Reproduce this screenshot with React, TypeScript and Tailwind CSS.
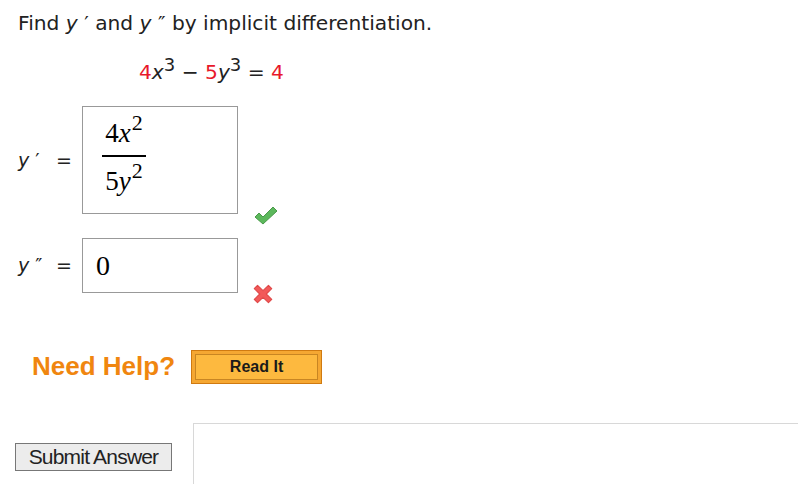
import React from 'react';

const sans = "font-['DejaVu_Sans',Verdana,sans-serif]";
const serif = "font-['Liberation_Serif','Times_New_Roman',serif]";

const Check = () => (
  <svg width="26" height="22" viewBox="0 0 26 22">
    <path d="M2 12 L6 8 L10 12 L20 2 L24 6 L10 19 Z" fill="#5cb85c" stroke="#4a9a4a" strokeWidth="1" strokeLinejoin="round" />
  </svg>
);

const Cross = () => (
  <svg width="24" height="24" viewBox="0 0 22 22">
    <path d="M3 6 L6 3 L11 8 L16 3 L19 6 L14 11 L19 16 L16 19 L11 14 L6 19 L3 16 L8 11 Z" fill="#f25a5a" stroke="#e04848" strokeWidth="1" strokeLinejoin="round" />
  </svg>
);

export default function App() {
  return (
    <div className={`relative w-[798px] h-[484px] bg-white overflow-hidden text-[#222] ${sans}`}>
      <p className="pl-[18px] pt-[9px] text-[20.2px] leading-[28px] whitespace-nowrap">
        Find <i>y</i> ′ and <i>y</i> ″ by implicit differentiation.
      </p>

      <div className="pl-[139px] pt-[22px] text-[20.2px] leading-[26px] text-[#e8182b] whitespace-nowrap">
        4<i className="text-[#222]">x</i><sup className="text-[18px] text-[#222] relative -top-[8px]">3</sup>
        <span className="text-[#222]"> − </span>5<i className="text-[#222]">y</i>
        <sup className="text-[18px] text-[#222] relative -top-[8px]">3</sup>
        <span className="text-[#222]"> = </span>4
      </div>

      <div className="flex items-end mt-[21px] pl-[18px]">
        <div className="flex items-center h-[108px] w-[64px] text-[19px]">
          <span className="w-[38px]"><i>y</i> ′</span>
          <span>=</span>
        </div>
        <div className="w-[156px] h-[108px] border border-[#999] flex flex-col items-start pl-[19px] pt-[13px]">
          <div className={`flex flex-col items-center ${serif} text-[27px] leading-none text-black`}>
            <div className="px-[2px] pb-[8px]">
              4<i>x</i><sup className="text-[22px] relative -top-[12px] ml-[1px]">2</sup>
            </div>
            <div className="w-[44px] h-[1.5px] bg-black" />
            <div className="px-[2px] pt-[11px]">
              5<i>y</i><sup className="text-[22px] relative -top-[12px] ml-[1px]">2</sup>
            </div>
          </div>
        </div>
        <div className="ml-[15px] -mb-[13px]"><Check /></div>
      </div>

      <div className="flex items-end mt-[24px] pl-[18px]">
        <div className="flex items-center h-[55px] w-[64px] text-[19px]">
          <span className="w-[38px]"><i>y</i> ″</span>
          <span>=</span>
        </div>
        <div className={`w-[156px] h-[55px] border border-[#999] flex items-center pl-[13px] ${serif} text-[28px] text-black`}>
          0
        </div>
        <div className="ml-[13px] -mb-[13px]"><Cross /></div>
      </div>

      <div className="flex items-center mt-[54px] pl-[32px] gap-[16px]">
        <span className="font-['Liberation_Sans',Arial,sans-serif] font-bold text-[26px] text-[#f0860f]">Need Help?</span>
        <div className="w-[131px] h-[34px] bg-[#f5a732] border border-[#d07a10] p-[3px]">
          <div className="w-full h-full bg-[#fdb93f] border border-[#c88522] flex items-center justify-center font-['Liberation_Sans',Arial,sans-serif] font-bold text-[16px] text-[#1a1a1a]">
            Read It
          </div>
        </div>
      </div>

      <div className="flex items-start mt-[37px] pl-[15px]">
        <div className="mt-[20px] w-[157px] h-[28px] bg-[#ececec] border border-[#777] flex items-center justify-center font-['Liberation_Sans',Arial,sans-serif] text-[21px] tracking-[-0.8px] text-[#222]">
          Submit Answer
        </div>
        <div className="ml-[21px] flex-1 h-[80px] border-t border-l border-[#d8d8d8]" />
      </div>
    </div>
  );
}
